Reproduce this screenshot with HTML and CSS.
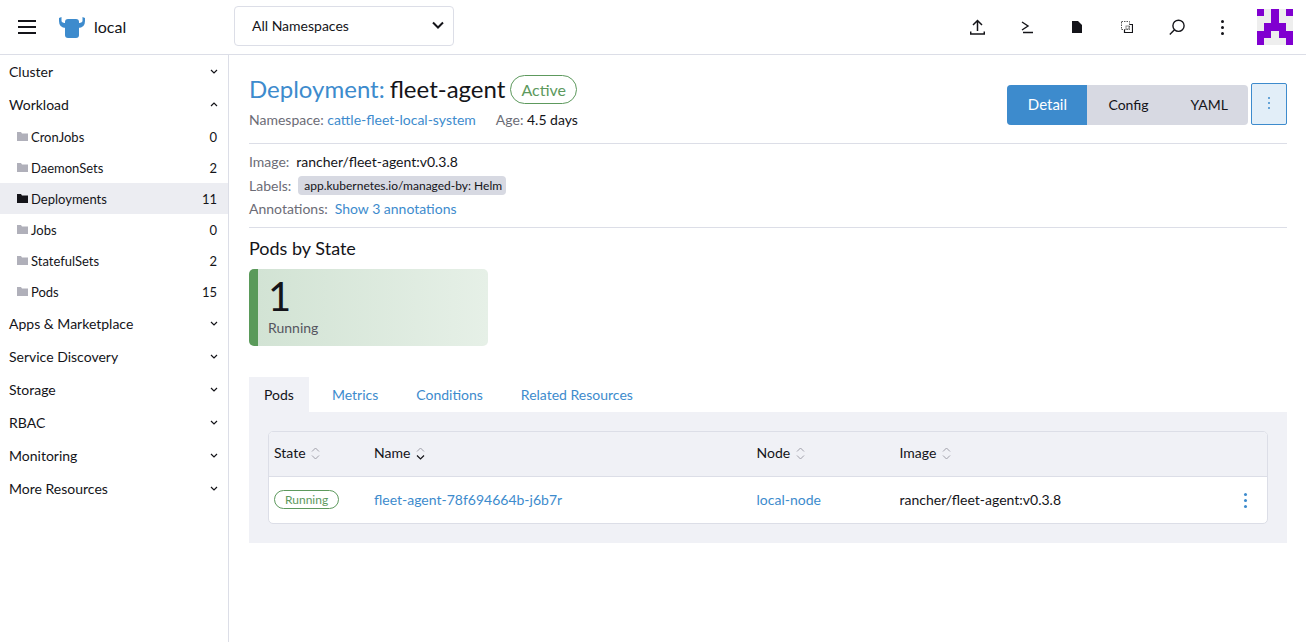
FILE: index.html
```html
<!DOCTYPE html>
<html>
<head>
  <title>fleet-agent</title>
  <meta name="viewport" content="width=device-width, initial-scale=1.0">
  <link rel="stylesheet" href="styles.css">
</head>
<body>
<header class="topbar">
  <div class="menu-btn"><span></span><span></span><span></span></div>
  <svg class="logo" width="26" height="22" viewBox="0 0 26 22">
    <path d="M0 1 L2.5 0 L2.5 4 Q3 6 7 6 L7 11 Q0 11 0 4 Z" fill="#3d8bcd"/>
    <path d="M26 1 L23.5 0 L23.5 4 Q23 6 19 6 L19 11 Q26 11 26 4 Z" fill="#3d8bcd"/>
    <rect x="6" y="2" width="14" height="19" rx="3" fill="#3d8bcd"/>
  </svg>
  <span class="cluster-name">local</span>
  <div class="ns-select">
    <span>All Namespaces</span>
    <svg width="12" height="8" viewBox="0 0 12 8"><path d="M1 1.5 L6 6.5 L11 1.5" fill="none" stroke="#141419" stroke-width="2"/></svg>
  </div>
  <div class="top-icons">
    <div class="ibox"><svg width="15" height="16" viewBox="0 0 15 16"><path d="M7.5 12 V1.5 M3 6 L7.5 1.5 L12 6 M0.7 12.5 V15 H14.3 V12.5" fill="none" stroke="#141419" stroke-width="1.5"/></svg></div>
    <div class="ibox"><svg width="12" height="13" viewBox="0 0 12 13"><path d="M1 1 L7 5 L1 9 M2 11.5 H12" fill="none" stroke="#141419" stroke-width="1.4"/></svg></div>
    <div class="ibox"><svg width="10" height="12" viewBox="0 0 10 12"><path d="M0 0 H6 L10 4 V12 H0 Z" fill="#141419"/></svg></div>
    <div class="ibox"><svg width="12" height="12" viewBox="0 0 12 12"><rect x="0.5" y="0.5" width="8" height="8" fill="none" stroke="#555" stroke-dasharray="1.5 1"/><path d="M3.5 9 V11.5 H11.5 V3.5 H9" fill="none" stroke="#141419" stroke-width="1.2"/><rect x="5" y="5" width="3" height="3" fill="none" stroke="#777" stroke-width="0.8"/></svg></div>
    <div class="ibox"><svg width="17" height="16" viewBox="0 0 17 16"><circle cx="9.5" cy="6.8" r="5.6" fill="none" stroke="#141419" stroke-width="1.4"/><path d="M5.5 10.8 L0.8 15.5" stroke="#141419" stroke-width="1.4"/></svg></div>
    <div class="ibox last"><div class="kebab"><i></i><i></i><i></i></div></div>
  </div>
  <svg class="avatar" width="36" height="36" viewBox="0 0 5 5" shape-rendering="crispEdges">
    <rect width="5" height="5" fill="#eeeeee"/>
    <path d="M0 0 H1 V1 H0 Z M4 0 H5 V1 H4 Z M2 0 H3 V2 H4 V3 H5 V5 H4 V4 H3 V3 H2 V4 H1 V5 H0 V3 H1 V2 H2 Z" fill="#8000d0"/>
  </svg>
</header>

<div class="layout">
  <nav class="sidebar">
    <div class="group"><span>Cluster</span><svg class="chev" width="8" height="5" viewBox="0 0 8 5"><path d="M1 1 L4 4 L7 1"/></svg></div>
    <div class="group"><span>Workload</span><svg class="chev" width="8" height="5" viewBox="0 0 8 5"><path d="M1 4 L4 1 L7 4"/></svg></div>
    <ul class="sub">
      <li><svg class="folder" width="11" height="9" viewBox="0 0 11 9"><path d="M0 0 H4 L5 1.5 H11 V9 H0 Z"/></svg><span>CronJobs</span><b>0</b></li>
      <li><svg class="folder" width="11" height="9" viewBox="0 0 11 9"><path d="M0 0 H4 L5 1.5 H11 V9 H0 Z"/></svg><span>DaemonSets</span><b>2</b></li>
      <li class="active"><svg class="folder" width="11" height="9" viewBox="0 0 11 9"><path d="M0 0 H4 L5 1.5 H11 V9 H0 Z"/></svg><span>Deployments</span><b>11</b></li>
      <li><svg class="folder" width="11" height="9" viewBox="0 0 11 9"><path d="M0 0 H4 L5 1.5 H11 V9 H0 Z"/></svg><span>Jobs</span><b>0</b></li>
      <li><svg class="folder" width="11" height="9" viewBox="0 0 11 9"><path d="M0 0 H4 L5 1.5 H11 V9 H0 Z"/></svg><span>StatefulSets</span><b>2</b></li>
      <li><svg class="folder" width="11" height="9" viewBox="0 0 11 9"><path d="M0 0 H4 L5 1.5 H11 V9 H0 Z"/></svg><span>Pods</span><b>15</b></li>
    </ul>
    <div class="group"><span>Apps &amp; Marketplace</span><svg class="chev" width="8" height="5" viewBox="0 0 8 5"><path d="M1 1 L4 4 L7 1"/></svg></div>
    <div class="group"><span>Service Discovery</span><svg class="chev" width="8" height="5" viewBox="0 0 8 5"><path d="M1 1 L4 4 L7 1"/></svg></div>
    <div class="group"><span>Storage</span><svg class="chev" width="8" height="5" viewBox="0 0 8 5"><path d="M1 1 L4 4 L7 1"/></svg></div>
    <div class="group"><span>RBAC</span><svg class="chev" width="8" height="5" viewBox="0 0 8 5"><path d="M1 1 L4 4 L7 1"/></svg></div>
    <div class="group"><span>Monitoring</span><svg class="chev" width="8" height="5" viewBox="0 0 8 5"><path d="M1 1 L4 4 L7 1"/></svg></div>
    <div class="group"><span>More Resources</span><svg class="chev" width="8" height="5" viewBox="0 0 8 5"><path d="M1 1 L4 4 L7 1"/></svg></div>
  </nav>

  <main class="content">
    <div class="head">
      <div class="head-left">
        <h1><a href="#">Deployment:</a> fleet-agent <span class="badge">Active</span></h1>
        <div class="sub-head">
          <span>Namespace: <a href="#">cattle-fleet-local-system</a></span>
          <span>Age: <em>4.5 days</em></span>
        </div>
      </div>
      <div class="head-right">
        <div class="toggle">
          <button class="on">Detail</button>
          <button>Config</button>
          <button>YAML</button>
        </div>
        <button class="more"><i></i><i></i><i></i></button>
      </div>
    </div>

    <div class="meta">
      <div class="meta-row"><span>Image:</span><em>rancher/fleet-agent:v0.3.8</em></div>
      <div class="meta-row"><span>Labels:</span><code class="tag">app.kubernetes.io/managed-by: Helm</code></div>
      <div class="meta-row"><span>Annotations:</span><a href="#">Show 3 annotations</a></div>
    </div>

    <h3>Pods by State</h3>
    <div class="state-card">
      <div class="state-num">1</div>
      <div class="state-label">Running</div>
    </div>

    <div class="tabs">
      <div class="tab active">Pods</div>
      <div class="tab">Metrics</div>
      <div class="tab">Conditions</div>
      <div class="tab">Related Resources</div>
    </div>
    <div class="tab-body">
      <div class="table">
        <div class="tr th">
          <div class="c-state">State <svg class="sort" width="9" height="13" viewBox="0 0 9 13"><path d="M1 4.5 L4.5 1 L8 4.5 M1 8.5 L4.5 12 L8 8.5"/></svg></div>
          <div class="c-name">Name <svg class="sort" width="9" height="13" viewBox="0 0 9 13"><path d="M1 4.5 L4.5 1 L8 4.5"/><path class="down" d="M1 8.5 L4.5 12 L8 8.5"/></svg></div>
          <div class="c-node">Node <svg class="sort" width="9" height="13" viewBox="0 0 9 13"><path d="M1 4.5 L4.5 1 L8 4.5 M1 8.5 L4.5 12 L8 8.5"/></svg></div>
          <div class="c-image">Image <svg class="sort" width="9" height="13" viewBox="0 0 9 13"><path d="M1 4.5 L4.5 1 L8 4.5 M1 8.5 L4.5 12 L8 8.5"/></svg></div>
        </div>
        <div class="tr td">
          <div class="c-state"><span class="pill">Running</span></div>
          <div class="c-name"><a href="#">fleet-agent-78f694664b-j6b7r</a></div>
          <div class="c-node"><a href="#">local-node</a></div>
          <div class="c-image">rancher/fleet-agent:v0.3.8</div>
          <div class="row-menu"><i></i><i></i><i></i></div>
        </div>
      </div>
    </div>
  </main>
</div>
</body>
</html>
```

FILE: styles.css
```css
* {
  box-sizing: border-box;
}

body {
  margin: 0;
  font-family: Lato, "Liberation Sans", sans-serif;
  font-size: 14px;
  color: #141419;
  background: #fff;
  height: 642px;
  overflow: hidden;
}

a {
  color: #3d8bcd;
  text-decoration: none;
}

em {
  font-style: normal;
}

/* barra de arriba */
.topbar {
  height: 55px;
  display: flex;
  align-items: center;
  border-bottom: 1px solid #dcdee7;
  padding-left: 18px;
}

.menu-btn {
  width: 18px;
  display: flex;
  flex-direction: column;
  gap: 4px;
  margin-right: 23px;
}

.menu-btn span {
  height: 2px;
  background: #141419;
}

.logo {
  margin-right: 9px;
  margin-top: 1px;
}

.cluster-name {
  font-size: 16px;
  width: 140px;
  padding-bottom: 2px;
}

.ns-select {
  width: 220px;
  height: 40px;
  border: 1px solid #dcdee7;
  border-radius: 4px;
  display: flex;
  align-items: center;
  justify-content: space-between;
  padding: 0 9px 2px 17px;
  font-size: 14px;
  margin-top: -2px;
}

.top-icons {
  margin-left: auto;
  display: flex;
  align-items: center;
  margin-right: 15px;
}

.ibox {
  width: 50px;
  display: flex;
  justify-content: center;
  align-items: center;
}

.ibox.last {
  width: 40px;
}

.kebab {
  display: flex;
  flex-direction: column;
  gap: 3px;
}

.kebab i {
  width: 3px;
  height: 3px;
  border-radius: 50%;
  background: #141419;
}

.avatar {
  margin-right: 13px;
}

.layout {
  display: flex;
  height: 587px;
}

/* menu lateral */
.sidebar {
  width: 229px;
  border-right: 1px solid #dcdee7;
  flex-shrink: 0;
}

.group {
  height: 33px;
  display: flex;
  align-items: center;
  justify-content: space-between;
  padding: 0 10px 0 9px;
  font-size: 14px;
}

.chev path {
  fill: none;
  stroke: #141419;
  stroke-width: 1.2;
}

.sub {
  list-style: none;
  margin: 0;
  padding: 0;
}

.sub li {
  height: 31px;
  display: flex;
  align-items: center;
  padding: 0 11px 0 17px;
  font-size: 13px;
}

.sub li span {
  flex: 1;
  margin-left: 3px;
}

.sub li b {
  font-weight: 400;
}

.folder {
  fill: #b0b0ba;
}

.sub li.active {
  background: #ecedf2;
}

.sub li.active .folder {
  fill: #141419;
}

/* contenido */
.content {
  flex: 1;
  padding: 19px 19px 0 20px;
}

.head {
  display: flex;
  justify-content: space-between;
  border-bottom: 1px solid #dcdee7;
  height: 70px;
}

h1 {
  margin: 0;
  font-size: 24px;
  font-weight: 400;
  line-height: 30px;
  display: flex;
  align-items: center;
  gap: 5px;
}

.badge {
  border: 1px solid #5d995d;
  color: #5d995d;
  border-radius: 15px;
  font-size: 16px;
  line-height: 27px;
  padding: 0 10px;
}

.sub-head {
  display: flex;
  gap: 20px;
  font-size: 14px;
  color: #6c6c76;
  margin-top: 7px;
  line-height: 17px;
}

.sub-head em {
  color: #141419;
}

.head-right {
  display: flex;
  align-items: flex-start;
  gap: 3px;
  margin-top: 10px;
}

.toggle {
  display: flex;
  background: #d7d9e2;
  border-radius: 4px;
  margin-top: 1px;
}

.toggle button {
  border: 0;
  background: none;
  font: inherit;
  color: #141419;
  height: 40px;
  padding: 0 21px 2px;
  font-size: 14px;
}

.toggle button:last-child {
  padding-right: 20px;
}

.toggle button.on {
  background: #3d8bcd;
  color: #fff;
  border-radius: 4px 0 0 4px;
  width: 80px;
  padding: 0 0 2px;
  font-size: 15px;
}

.more {
  width: 36px;
  height: 42px;
  margin-top: -1px;
  background: #e2eef8;
  border: 1px solid #3d8bcd;
  border-radius: 2px;
  display: flex;
  flex-direction: column;
  align-items: center;
  justify-content: center;
  gap: 3px;
  padding: 0 0 2px;
}

.more i, .row-menu i {
  display: block;
  background: #3d8bcd;
  border-radius: 50%;
  width: 2px;
  height: 2px;
}

.meta {
  border-bottom: 1px solid #dcdee7;
  padding: 6px 0;
  font-size: 14px;
  color: #6c6c76;
}

.meta-row {
  height: 23.5px;
  display: flex;
  align-items: center;
  gap: 7px;
}

.meta-row em {
  color: #141419;
}

.tag {
  font-family: inherit;
  font-size: 12px;
  color: #141419;
  background: #d7d9e2;
  border-radius: 4px;
  padding: 0 4px 0 6px;
  line-height: 19px;
}

h3 {
  margin: 8px 0 9px;
  font-size: 18px;
  font-weight: 400;
  line-height: 24px;
}

.state-card {
  width: 239px;
  height: 77px;
  border-left: 9px solid #5a9a5a;
  border-radius: 5px;
  background: linear-gradient(to right, #d2e3d4, #e6f0e7);
  padding: 6px 0 0 10px;
}

.state-num {
  font-size: 40px;
  line-height: 42px;
}

.state-label {
  font-size: 14px;
  color: #55555f;
  line-height: 18px;
  margin-top: 2px;
}

.tabs {
  display: flex;
  gap: 8px;
  margin-top: 31px;
}

.tab {
  height: 35px;
  line-height: 36px;
  font-size: 14px;
  color: #3d8bcd;
  padding: 0 15px;
}

.tab.active {
  background: #f0f1f6;
  color: #141419;
}

.tab-body {
  background: #f0f1f6;
  padding: 19px;
  height: 131px;
}

.table {
  background: #fff;
  border: 1px solid #dcdee7;
  border-radius: 5px;
  overflow: hidden;
}

.tr {
  display: flex;
  align-items: center;
  position: relative;
}

.th {
  height: 45px;
  background: #f0f1f6;
  border-bottom: 1px solid #dcdee7;
  padding-bottom: 2px;
}

.td {
  height: 46px;
  font-size: 14px;
}

.c-state {
  width: 105px;
  padding-left: 5px;
}

.c-name {
  width: 382.5px;
}

.c-node {
  width: 143px;
}

.sort {
  vertical-align: -2px;
  margin-left: 2px;
}

.sort path {
  fill: none;
  stroke: #a0a0aa;
  stroke-width: 1;
}

.sort .down {
  stroke: #141419;
  stroke-width: 1.2;
}

.pill {
  display: inline-block;
  border: 1px solid #5d995d;
  color: #5d995d;
  border-radius: 10px;
  font-size: 12px;
  line-height: 17px;
  padding: 0 10px;
}

.row-menu {
  position: absolute;
  right: 20px;
  top: 16px;
  display: flex;
  flex-direction: column;
  gap: 3px;
}

.row-menu i {
  width: 3px;
  height: 3px;
}
```
